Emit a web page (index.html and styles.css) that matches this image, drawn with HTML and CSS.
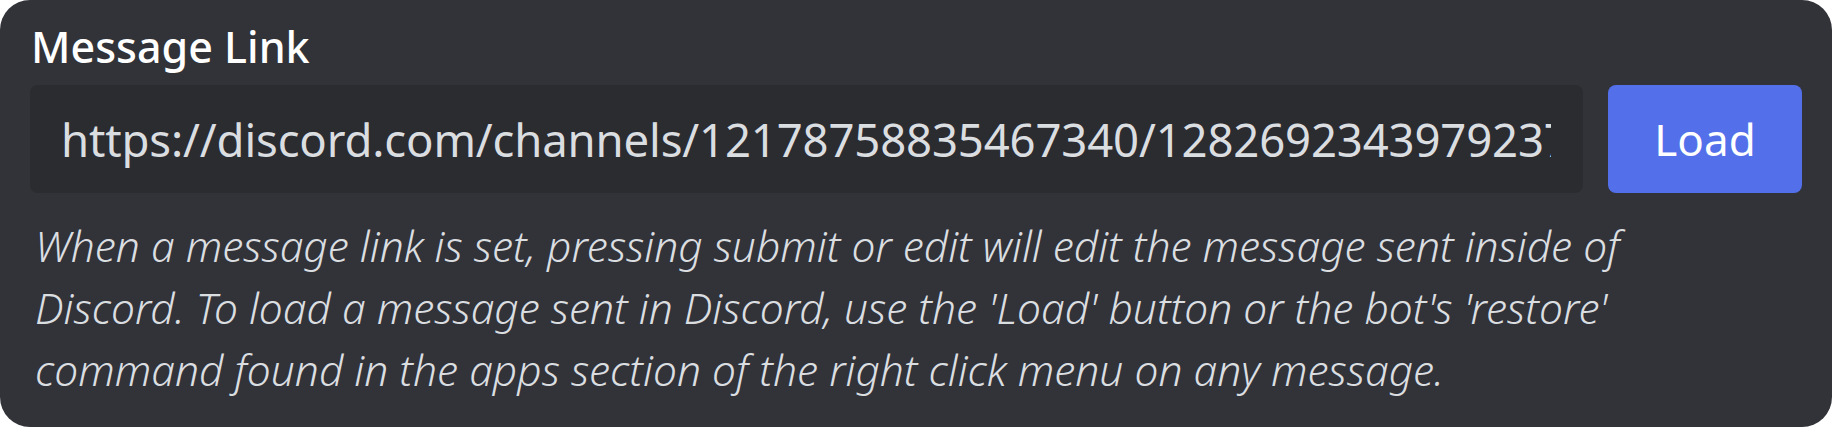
FILE: index.html
```html
<!DOCTYPE html>
<html lang="en">
  <head>
    <meta charset="UTF-8" />
    <title>Message Link</title>
    <link rel="stylesheet" href="styles.css">
  </head>
  <body>
    <div class="field">
      <label for="message_link" class="field-label">Message Link</label>
      <div class="field-row">
        <input
          type="text"
          id="message_link"
          name="message_link"
          class="field-input"
          value="https://discord.com/channels/12178758835467340/1282692343979237376"
        />
        <button type="button" class="btn">Load</button>
      </div>
      <p class="field-hint">
        When a message link is set, pressing submit or edit will edit the message sent inside of
        Discord. To load a message sent in Discord, use the 'Load' button or the bot's 'restore'
        command found in the apps section of the right click menu on any message.
      </p>
    </div>
  </body>
</html>
```

FILE: styles.css
```css
body {
  font-family: "Noto Sans", Arial, sans-serif;
  background: #ffffff;
  margin: 0;
}
.field {
  background: #313338;
  border-radius: 30px;
  height: 427px;
  box-sizing: border-box;
  padding: 25px 30px 0 30px;
  display: flex;
  flex-direction: column;
}
.field-label {
  color: #ffffff;
  font-size: 43px;
  font-weight: 500;
  line-height: 44px;
  margin-bottom: 16px;
  padding-left: 1px;
}
.field-row {
  display: flex;
  gap: 25px;
  height: 108px;
}
.field-input {
  flex: 1;
  min-width: 0;
  background: #2b2c30;
  color: #dbdee1;
  border: none;
  border-radius: 8px;
  padding: 0 32px 0 31px;
  font-family: "Noto Sans", Arial, sans-serif;
  font-size: 45.5px;
  letter-spacing: -0.15px;
  outline: none;
}
.btn {
  width: 194px;
  background: #5370ea;
  color: #ffffff;
  border: none;
  border-radius: 8px;
  cursor: pointer;
  font-family: "Noto Sans", Arial, sans-serif;
  font-size: 44px;
  font-weight: 450;
}
.field-hint {
  max-width: 1700px;
  margin: 22px 0 0 0;
  color: #dbdee1;
  font-size: 42.5px;
  font-style: italic;
  font-weight: 350;
  line-height: 62px;
  padding-left: 5px;
}
```
